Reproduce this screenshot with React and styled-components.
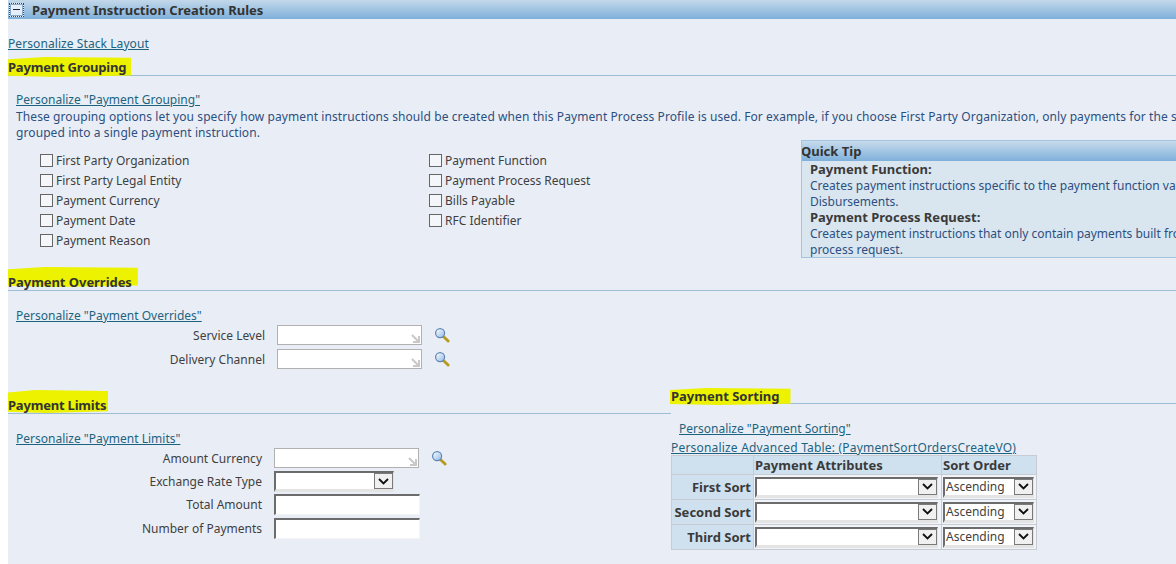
import styled, { createGlobalStyle } from "styled-components";

const GlobalStyle = createGlobalStyle`
  html, body {
    margin: 0;
    padding: 0;
    background: #fff;
    overflow: hidden;
  }
  body {
    font-family: "Noto Sans", "Open Sans", sans-serif;
    font-size: 12px;
    color: #3f3f3f;
  }
`;

const Page = styled.div`
  width: 1168px;
  height: 564px;
  margin-left: 8px;
  background: #e9eef6;
  overflow: hidden;
`;

const TitleBar = styled.div`
  height: 19px;
  display: flex;
  align-items: center;
  gap: 8px;
  padding-left: 1px;
  background: linear-gradient(#c3d8ea, #7fb0da);
  font-size: 13px;
  font-weight: 700;
  color: #333;
`;

const Collapse = styled.span`
  width: 13px;
  height: 12px;
  border: 1px dotted #444;
  display: flex;
  align-items: center;
  justify-content: center;
  background: #e6eef8;
  box-shadow: inset 0 0 0 1px #8aa8cc;
  &::after {
    content: "";
    width: 7px;
    height: 1px;
    background: #223;
  }
`;

const Link = styled.a`
  display: block;
  width: fit-content;
  margin-left: ${(p) => p.$indent || 0}px;
  margin-top: ${(p) => p.$top || 0}px;
  line-height: 16px;
  color: #1d637f;
  letter-spacing: ${(p) => p.$spacing || 0}px;
  text-decoration: underline;
  white-space: nowrap;
`;

const Heading = styled.div`
  border-bottom: 1px solid #9dbdd4;
  height: ${(p) => p.$height || 16}px;
  margin-top: ${(p) => p.$top || 0}px;
  font-size: 13px;
  font-weight: 700;
  line-height: 16px;
  color: #333;
  white-space: nowrap;
`;

const Marked = styled.span`
  position: relative;
  display: inline-block;
  z-index: 0;
  letter-spacing: ${(p) => p.$spacing ?? 0}px;
  &::before {
    content: "";
    position: absolute;
    z-index: -1;
    left: ${(p) => p.$left ?? -1}px;
    right: ${(p) => p.$right ?? -5}px;
    top: ${(p) => p.$up ?? -2}px;
    bottom: ${(p) => p.$down ?? -2}px;
    background: #ecf200;
    clip-path: polygon(0 12%, 30% 0, 100% 4%, 100% 92%, 40% 100%, 0 94%);
  }
`;

const Intro = styled.p`
  box-sizing: border-box;
  height: 32px;
  margin: 0 0 0 8px;
  padding-top: 1px;
  line-height: 16px;
  color: #2d4f80;
  letter-spacing: 0.09px;
  white-space: nowrap;
`;

const GroupingRow = styled.div`
  display: flex;
  height: 134px;
`;

const CheckColumn = styled.div`
  width: ${(p) => p.$width}px;
  padding-top: ${(p) => p.$top || 0}px;
  flex: none;
`;

const CheckRow = styled.label`
  height: 20px;
  display: flex;
  align-items: center;
  gap: 3px;
`;

const Box = styled.span`
  width: 11px;
  height: 11px;
  border: 1px solid #666;
  background: #f4f6fa;
`;

const TipBox = styled.div`
  width: 400px;
  height: 118px;
  border: 1px solid #a3c3e0;
  border-right: 0;
  box-sizing: border-box;
  background: #d9e6f0;
  overflow: hidden;
  white-space: nowrap;
`;

const TipTitle = styled.div`
  height: 20px;
  line-height: 21px;
  margin-left: -1px;
  background: linear-gradient(#c7dbec, #7fb0da);
  font-size: 13px;
  font-weight: 700;
  color: #333;
`;

const TipBody = styled.div`
  padding-left: 8px;
  line-height: 16px;
`;

const TipLabel = styled.div`
  font-size: 13px;
  font-weight: 700;
  color: #3a3a3a;
`;

const TipText = styled.div`
  height: 16px;
  line-height: 18px;
  color: #2d4f80;
`;

const FormRows = styled.div`
  margin-top: -1px;
`;

const FormRow = styled.div`
  display: grid;
  grid-template-columns: ${(p) => p.$label}px auto auto;
  justify-content: start;
  align-items: center;
  column-gap: 12px;
  height: ${(p) => p.$height || 24}px;
`;

const Label = styled.span`
  text-align: right;
  white-space: nowrap;
`;

const Lov = styled.span`
  position: relative;
  box-sizing: border-box;
  display: block;
  width: 145px;
  height: 20px;
  border: 1px solid #b1b1b1;
  background: #fff;

  svg {
    position: absolute;
    right: 1px;
    bottom: 1px;
  }
`;

const Field = styled.input`
  box-sizing: border-box;
  display: block;
  width: 146px;
  height: 21px;
  padding: 0;
  background: #fff;
  border-style: solid;
  border-width: 2px 1px 1px 2px;
  border-color: #6c6c6c #f4f4f4 #f4f4f4 #6c6c6c;
  outline: 0;
`;

const Select = styled.span`
  box-sizing: border-box;
  display: flex;
  align-items: center;
  justify-content: space-between;
  width: ${(p) => p.$width}px;
  height: 21px;
  padding: 0 0 0 1px;
  background: #fff;
  border-style: solid;
  border-width: 2px 1px 3px 2px;
  border-color: #6c6c6c #e4e4e4 #e4e4e4 #6c6c6c;
`;

const Arrow = styled.span`
  box-sizing: border-box;
  flex: none;
  width: 19px;
  height: 16px;
  border: 1px solid #7a7a7a;
  background: #f0f0f0;
  display: flex;
  align-items: center;
  justify-content: center;
`;

const Columns = styled.div`
  display: grid;
  grid-template-columns: 663px 1fr;
  height: 180px;
`;

const SortTable = styled.table`
  border-collapse: collapse;
  width: 365px;
  margin-top: -1px;
  table-layout: fixed;

  th, td {
    border: 1px solid #c8ccd2;
    padding: 0;
  }
  th {
    background: #cfe0ef;
    font-size: 13px;
    font-weight: 700;
    color: #3a3a3a;
    text-align: left;
    height: 18px;
    padding-left: 1px;
    white-space: nowrap;
  }
  tbody th {
    text-align: right;
    padding: 0 2px 0 0;
    height: 24px;
  }
  td {
    background: #f0f3f7;
    padding-left: 1px;
  }
`;

const Magnifier = () => (
  <svg width="16" height="16" viewBox="0 0 17 17">
    <defs>
      <linearGradient id="lens" x1="0" y1="0" x2="1" y2="1">
        <stop offset="0" stopColor="#ffffff" />
        <stop offset="1" stopColor="#8fb8e6" />
      </linearGradient>
    </defs>
    <path d="M10 10 L15 15" stroke="#b79a1e" strokeWidth="3" strokeLinecap="round" />
    <circle cx="6.5" cy="6.5" r="4.8" fill="url(#lens)" stroke="#5f86b5" strokeWidth="1.3" />
  </svg>
);

const Corner = () => (
  <svg width="9" height="9" viewBox="0 0 9 9">
    <path d="M1 1 L7 7 M8 2 V8 H2" fill="none" stroke="#c8c8c8" strokeWidth="2" />
  </svg>
);

const Chevron = () => (
  <svg width="11" height="7" viewBox="0 0 11 7">
    <path d="M1 1 L5.5 5.5 L10 1" fill="none" stroke="#111" strokeWidth="1.8" />
  </svg>
);

const leftChecks = [
  "First Party Organization",
  "First Party Legal Entity",
  "Payment Currency",
  "Payment Date",
  "Payment Reason",
];
const rightChecks = [
  "Payment Function",
  "Payment Process Request",
  "Bills Payable",
  "RFC Identifier",
];
const sorts = ["First Sort", "Second Sort", "Third Sort"];

const Check = ({ text }) => (
  <CheckRow>
    <Box />
    {text}
  </CheckRow>
);

export default function App() {
  return (
    <Page>
      <GlobalStyle />
      <TitleBar>
        <Collapse />
        Payment Instruction Creation Rules
      </TitleBar>

      <Link $top={17} $spacing={0.08}>Personalize Stack Layout</Link>
      <Heading $top={7}>
        <Marked $spacing={-0.2}>Payment Grouping</Marked>
      </Heading>

      <Link $indent={8} $top={16}>Personalize "Payment Grouping"</Link>
      <Intro>
        These grouping options let you specify how payment instructions should be created when this Payment Process Profile is used. For example, if you choose First Party Organization, only payments for the s
        <br />
        grouped into a single payment instruction.
      </Intro>

      <GroupingRow>
        <CheckColumn $width={32} />
        <CheckColumn $width={389} $top={10}>
          {leftChecks.map((c) => <Check key={c} text={c} />)}
        </CheckColumn>
        <CheckColumn $width={372} $top={10}>
          {rightChecks.map((c) => <Check key={c} text={c} />)}
        </CheckColumn>
        <TipBox>
          <TipTitle>Quick Tip</TipTitle>
          <TipBody>
            <TipLabel>Payment Function:</TipLabel>
            <TipText>Creates payment instructions specific to the payment function va</TipText>
            <TipText>Disbursements.</TipText>
            <TipLabel>Payment Process Request:</TipLabel>
            <TipText>Creates payment instructions that only contain payments built fro</TipText>
            <TipText>process request.</TipText>
          </TipBody>
        </TipBox>
      </GroupingRow>

      <Heading>
        <Marked $spacing={-0.05} $left={-3} $right={-6} $up={-7} $down={3}>Payment Overrides</Marked>
      </Heading>

      <Link $indent={8} $top={17}>Personalize "Payment Overrides"</Link>
      <FormRows>
        <FormRow $label={257}>
          <Label>Service Level</Label>
          <Lov><Corner /></Lov>
          <Magnifier />
        </FormRow>
        <FormRow $label={257}>
          <Label>Delivery Channel</Label>
          <Lov><Corner /></Lov>
          <Magnifier />
        </FormRow>
      </FormRows>

      <Columns>
        <div>
          <Heading $top={26}>
            <Marked $spacing={-0.2} $left={-4} $right={-2} $up={-7} $down={0}>Payment Limits</Marked>
          </Heading>
          <Link $indent={8} $top={17}>Personalize "Payment Limits"</Link>
          <FormRows>
            <FormRow $label={254}>
              <Label>Amount Currency</Label>
              <Lov><Corner /></Lov>
              <Magnifier />
            </FormRow>
            <FormRow $label={254} $height={23}>
              <Label>Exchange Rate Type</Label>
              <Select $width={120}>
                <span />
                <Arrow><Chevron /></Arrow>
              </Select>
            </FormRow>
            <FormRow $label={254} $height={23}>
              <Label>Total Amount</Label>
              <Field />
            </FormRow>
            <FormRow $label={254}>
              <Label>Number of Payments</Label>
              <Field />
            </FormRow>
          </FormRows>
        </div>
        <div>
          <Heading $top={17} $height={15}>
            <Marked $left={-1} $right={-11} $up={0} $down={-1}>Payment Sorting</Marked>
          </Heading>
          <Link $indent={8} $top={17}>Personalize "Payment Sorting"</Link>
          <Link $top={3} $spacing={0.19}>Personalize Advanced Table: (PaymentSortOrdersCreateVO)</Link>
          <SortTable>
            <colgroup>
              <col style={{ width: 82 }} />
              <col style={{ width: 188 }} />
              <col style={{ width: 95 }} />
            </colgroup>
            <thead>
              <tr>
                <th />
                <th>Payment Attributes</th>
                <th>Sort Order</th>
              </tr>
            </thead>
            <tbody>
              {sorts.map((s) => (
                <tr key={s}>
                  <th>{s}</th>
                  <td>
                    <Select $width={183}>
                      <span />
                      <Arrow><Chevron /></Arrow>
                    </Select>
                  </td>
                  <td>
                    <Select $width={91}>
                      <span>Ascending</span>
                      <Arrow><Chevron /></Arrow>
                    </Select>
                  </td>
                </tr>
              ))}
            </tbody>
          </SortTable>
        </div>
      </Columns>
    </Page>
  );
}
